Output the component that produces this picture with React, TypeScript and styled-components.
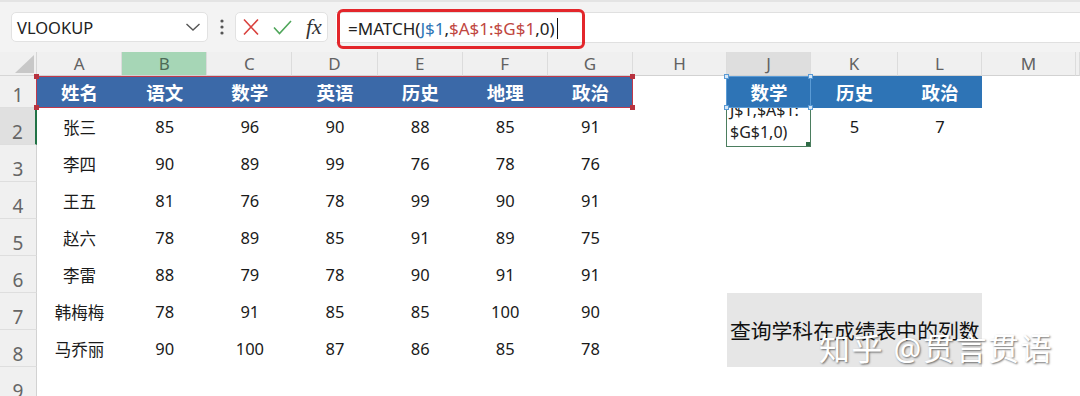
import React from "react";
import styled, { createGlobalStyle, css } from "styled-components";

const GlobalStyle = createGlobalStyle`
  html, body {
    margin: 0;
    padding: 0;
    background: #ffffff;
  }
  body {
    font-family: "Noto Sans", "Noto Sans CJK SC", sans-serif;
  }
`;

interface Pos {
  $r: number | string;
  $c: number | string;
}

const place = css<Pos>`
  grid-row: ${(p) => p.$r};
  grid-column: ${(p) => p.$c};
`;

const Page = styled.div`
  position: relative;
  width: 1080px;
  height: 396px;
  overflow: hidden;
  background: #fff;
`;

const Toolbar = styled.div`
  height: 52px;
  box-sizing: border-box;
  background: #f3f3f3;
  border-top: 2px solid #e4e4e4;
  display: flex;
  align-items: center;
  padding-left: 11px;
`;

const NameBox = styled.div`
  width: 197px;
  height: 30px;
  box-sizing: border-box;
  background: #fff;
  border: 1px solid #e2e2e2;
  border-radius: 5px;
  display: flex;
  align-items: center;
  justify-content: space-between;
  padding: 0 6px 0 5px;
  font-size: 16.5px;
  color: #222;
`;

const Dots = styled.div`
  width: 27px;
  display: flex;
  justify-content: center;
`;

const ActionBox = styled.div`
  width: 93px;
  height: 30px;
  box-sizing: border-box;
  background: #fff;
  border: 1px solid #e2e2e2;
  border-radius: 5px;
  display: flex;
  align-items: center;
  gap: 13px;
  padding-left: 6px;
`;

const Fx = styled.span`
  font-family: "Liberation Serif", "DejaVu Serif", serif;
  font-style: italic;
  font-size: 22px;
  color: #333;
  margin-left: 1px;
`;

const FormulaArea = styled.div`
  flex: 1;
  margin-left: 8px;
  height: 31px;
  box-sizing: border-box;
  background: #fff;
  border-top: 1px solid #e0e0e0;
  border-bottom: 1px solid #e0e0e0;
  display: flex;
  align-items: center;
`;

const Highlight = styled.div`
  width: 248px;
  height: 40px;
  margin-left: 1px;
  margin-top: 3px;
  box-sizing: border-box;
  border: 3px solid #e3262b;
  border-radius: 6px;
  display: flex;
  align-items: center;
  padding-left: 8px;
  font-size: 17px;
  color: #222;
  white-space: nowrap;
`;

const Ref = styled.span<{ $tone: string }>`
  color: ${(p) => p.$tone};
`;

const Caret = styled.span`
  display: inline-block;
  width: 1px;
  height: 21px;
  margin-left: 2px;
  background: #111;
`;

const Sheet = styled.div`
  display: grid;
  grid-template-columns: 37px repeat(7, 85.15px) 94px 84px 87px 84px 94px 1fr;
  grid-template-rows: 24px 32px repeat(8, 37px);
`;

const Corner = styled.div<Pos>`
  ${place};
  background: #f0f0f0;
  border-bottom: 1px solid #d6d6d6;
  border-right: 1px solid #d6d6d6;
`;

const ColHeader = styled.div<Pos & { $mark?: "green" | "gray" }>`
  ${place};
  background: ${(p) =>
    p.$mark === "green" ? "#a6d6b6" : p.$mark === "gray" ? "#dedede" : "#f0f0f0"};
  border-right: 1px solid #dcdcdc;
  border-bottom: 1px solid #d2d2d2;
  display: flex;
  align-items: center;
  justify-content: center;
  font-size: 17px;
  color: ${(p) => (p.$mark === "green" ? "#4d6b57" : "#626262")};
`;

const RowHeader = styled.div<Pos & { $active?: boolean }>`
  ${place};
  background: ${(p) => (p.$active ? "#e0e0e0" : "#f0f0f0")};
  border-bottom: 1px solid #dedede;
  border-right: ${(p) => (p.$active ? "2px solid #217346" : "1px solid #d2d2d2")};
  display: flex;
  align-items: flex-end;
  justify-content: center;
  padding-bottom: 2px;
  font-size: 19px;
  line-height: 1;
  color: #666;
`;

const TitleCell = styled.div<Pos & { $tone: string }>`
  ${place};
  background: ${(p) => p.$tone};
  color: #fff;
  font-weight: 700;
  font-size: 18.5px;
  display: flex;
  align-items: center;
  justify-content: center;
`;

const ValueCell = styled.div<Pos>`
  ${place};
  display: flex;
  align-items: center;
  justify-content: center;
  font-size: 16.5px;
  color: #1a1a1a;
`;

const RangeFrame = styled.div<Pos & { $line: string }>`
  ${place};
  position: relative;
  z-index: 2;
  margin-left: -1px;
  border: 1px solid ${(p) => p.$line};
  pointer-events: none;
`;

const Handle = styled.span<{ $fill: string; $edge: string; $v: "top" | "bottom"; $h: "left" | "right" }>`
  position: absolute;
  ${(p) => p.$v}: -3px;
  ${(p) => p.$h}: -3px;
  width: 5px;
  height: 5px;
  box-sizing: border-box;
  background: ${(p) => p.$fill};
  border: 1px solid ${(p) => p.$edge};
`;

const Editor = styled.div<Pos>`
  ${place};
  position: relative;
  z-index: 1;
  margin-bottom: -2px;
  background: #fff;
  border: 1px solid #4b7d5e;
  border-top: none;
  margin-left: -1px;
  overflow: hidden;
  display: flex;
  flex-direction: column;
  justify-content: flex-end;
  padding: 0 0 3px 3px;
  font-size: 16px;
  line-height: 22px;
  color: #222;
  white-space: nowrap;
`;

const EditorGrip = styled.span`
  position: absolute;
  right: 0;
  bottom: 0;
  width: 4px;
  height: 4px;
  background: #2f6b46;
`;

const NoteBox = styled.div<Pos>`
  ${place};
  background: #e6e6e6;
  display: flex;
  align-items: center;
  padding-left: 3px;
  font-size: 20.8px;
  color: #111;
  white-space: nowrap;
`;

const Watermark = styled.div`
  position: absolute;
  left: 819px;
  top: 333px;
  font-size: 31px;
  line-height: 1;
  color: #ffffff;
  letter-spacing: 1.5px;
  text-shadow: 1px 1px 2px rgba(0, 0, 0, 0.55);
  white-space: nowrap;
`;

const columns = ["A", "B", "C", "D", "E", "F", "G", "H", "J", "K", "L", "M", ""];
const titles = ["姓名", "语文", "数学", "英语", "历史", "地理", "政治"];
const scores: [string, number[]][] = [
  ["张三", [85, 96, 90, 88, 85, 91]],
  ["李四", [90, 89, 99, 76, 78, 76]],
  ["王五", [81, 76, 78, 99, 90, 91]],
  ["赵六", [78, 89, 85, 91, 89, 75]],
  ["李雷", [88, 79, 78, 90, 91, 91]],
  ["韩梅梅", [78, 91, 85, 85, 100, 90]],
  ["马乔丽", [90, 100, 87, 86, 85, 78]],
];

const LEFT_BLUE = "#3b69a8";
const RIGHT_BLUE = "#2e74b6";

const corners: ["top" | "bottom", "left" | "right"][] = [
  ["top", "left"],
  ["top", "right"],
  ["bottom", "left"],
  ["bottom", "right"],
];

const App: React.FC = () => {
  return (
    <Page>
      <GlobalStyle />
      <Toolbar>
        <NameBox>
          <span>VLOOKUP</span>
          <svg width="16" height="10" viewBox="0 0 16 10">
            <polyline points="1.5,2 8,8 14.5,2" fill="none" stroke="#555" strokeWidth="1.4" />
          </svg>
        </NameBox>
        <Dots>
          <svg width="4" height="16" viewBox="0 0 4 16">
            <circle cx="2" cy="2" r="1.6" fill="#555" />
            <circle cx="2" cy="8" r="1.6" fill="#555" />
            <circle cx="2" cy="14" r="1.6" fill="#555" />
          </svg>
        </Dots>
        <ActionBox>
          <svg width="18" height="18" viewBox="0 0 18 18">
            <path d="M2 1.5 L16 16.5 M16 1.5 L2 16.5" stroke="#d9423e" strokeWidth="1.6" fill="none" />
          </svg>
          <svg width="19" height="15" viewBox="0 0 19 15">
            <polyline points="1,7.5 6.5,13.5 18,1" fill="none" stroke="#4fa65a" strokeWidth="1.6" />
          </svg>
          <Fx>fx</Fx>
        </ActionBox>
        <FormulaArea>
          <Highlight>
            =MATCH(<Ref $tone="#2e75b5">J$1</Ref>,<Ref $tone="#c0463f">$A$1:$G$1</Ref>,0)
            <Caret />
          </Highlight>
        </FormulaArea>
      </Toolbar>

      <Sheet>
        <Corner $r={1} $c={1}>
          <svg width="36" height="23" viewBox="0 0 36 23">
            <polygon points="15,21 34,21 34,3" fill="#c8c8c8" />
          </svg>
        </Corner>
        {columns.map((label, i) => (
          <ColHeader
            key={`col-${i}`}
            $r={1}
            $c={i + 2}
            $mark={label === "B" ? "green" : label === "J" ? "gray" : undefined}
          >
            {label}
          </ColHeader>
        ))}
        {Array.from({ length: 9 }, (_, i) => (
          <RowHeader key={`row-${i}`} $r={i + 2} $c={1} $active={i === 1}>
            {i + 1}
          </RowHeader>
        ))}

        {titles.map((t, i) => (
          <TitleCell key={`t-${i}`} $r={2} $c={i + 2} $tone={LEFT_BLUE}>
            {t}
          </TitleCell>
        ))}
        {["数学", "历史", "政治"].map((t, i) => (
          <TitleCell key={`rt-${i}`} $r={2} $c={i + 10} $tone={RIGHT_BLUE}>
            {t}
          </TitleCell>
        ))}

        {scores.map(([name, nums], r) => (
          <React.Fragment key={name}>
            <ValueCell $r={r + 3} $c={2}>
              {name}
            </ValueCell>
            {nums.map((n, c) => (
              <ValueCell key={`${name}-${c}`} $r={r + 3} $c={c + 3}>
                {n}
              </ValueCell>
            ))}
          </React.Fragment>
        ))}

        <Editor $r={3} $c={10}>
          <div>=MATCH(</div>
          <div>J$1,$A$1:</div>
          <div>$G$1,0)</div>
          <EditorGrip />
        </Editor>
        <ValueCell $r={3} $c={11}>
          5
        </ValueCell>
        <ValueCell $r={3} $c={12}>
          7
        </ValueCell>

        <NoteBox $r="8 / 10" $c="10 / 13">
          查询学科在成绩表中的列数
        </NoteBox>

        <RangeFrame $r={2} $c="2 / 9" $line="#c0394b">
          {corners.map(([v, h]) => (
            <Handle key={`${v}-${h}`} $v={v} $h={h} $fill="#b8323f" $edge="#b8323f" />
          ))}
        </RangeFrame>
        <RangeFrame $r={2} $c={10} $line="#5b9bd5">
          {corners.map(([v, h]) => (
            <Handle key={`${v}-${h}`} $v={v} $h={h} $fill="#d6e7f7" $edge="#5b9bd5" />
          ))}
        </RangeFrame>
      </Sheet>

      <Watermark>知乎 @贯言贯语</Watermark>
    </Page>
  );
};

export default App;
